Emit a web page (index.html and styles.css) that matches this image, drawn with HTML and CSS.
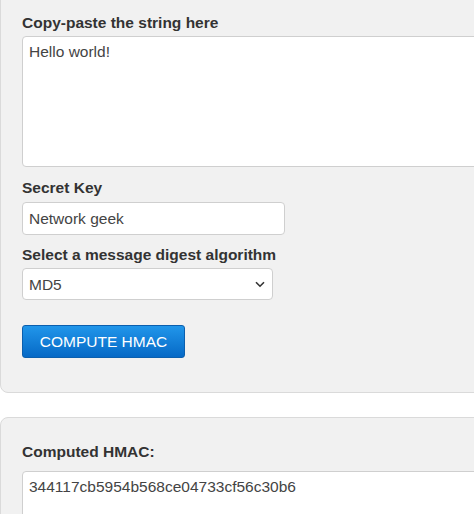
FILE: index.html
```html
<!DOCTYPE html>
<html lang="en">
<head>
    <meta charset="UTF-8">
    <meta name="viewport" content="width=device-width, initial-scale=1.0">
    <title>HMAC Generator</title>
    <link rel="stylesheet" href="styles.css">
</head>
<body>

    <div class="panel panel-input">
        <label class="label label-first" for="message">Copy-paste the string here</label>
        <textarea id="message" class="field field-area">Hello world!</textarea>

        <label class="label label-key" for="secretKey">Secret Key</label>
        <input type="text" id="secretKey" class="field field-key" value="Network geek">

        <label class="label label-algo" for="algo">Select a message digest algorithm</label>
        <div class="select-wrap">
            <select id="algo" class="field field-select">
                <option>MD5</option>
                <option>SHA1</option>
                <option>SHA256</option>
                <option>SHA512</option>
            </select>
            <svg class="chevron" width="10" height="7" viewBox="0 0 10 7">
                <path d="M1 1.2 L5 5.2 L9 1.2" fill="none" stroke="#333" stroke-width="1.6"/>
            </svg>
        </div>

        <button type="button" class="btn-compute">COMPUTE HMAC</button>
    </div>

    <div class="panel panel-output">
        <label class="label" for="result">Computed HMAC:</label>
        <div id="result" class="field field-result">344117cb5954b568ce04733cf56c30b6</div>
    </div>

</body>
</html>
```

FILE: styles.css
```css
body {
    margin: 0;
    font-family: "Liberation Sans", Arial, sans-serif;
    font-size: 15.5px;
    color: #333;
    background-color: #fff;
    overflow: hidden;
}
.panel {
    width: 580px;
    background-color: #f1f1f1;
    border: 1px solid #dadada;
    border-radius: 8px;
    padding: 0 21px;
}
.panel-input {
    margin-top: -10px;
    padding-top: 23px;
    padding-bottom: 34px;
}
.panel-output {
    margin-top: 24px;
    padding-top: 25px;
    height: 100px;
}
.label {
    display: block;
    font-weight: bold;
    line-height: 18px;
    color: #333;
}
.field {
    display: block;
    box-sizing: border-box;
    font-family: "Liberation Sans", Arial, sans-serif;
    font-size: 15.5px;
    color: #444;
    background-color: #fff;
    border: 1px solid #cfcfcf;
    border-radius: 4px;
    margin: 0;
}
.field-area {
    margin-top: 4px;
    width: 580px;
    height: 131px;
    padding: 6px 6px;
    line-height: 18px;
    resize: none;
}
.label-key {
    margin-top: 12px;
}
.field-key {
    margin-top: 5px;
    width: 263px;
    height: 33px;
    padding: 0 6px;
}
.label-algo {
    margin-top: 11px;
}
.select-wrap {
    position: relative;
    width: 251px;
    margin-top: 4px;
}
.field-select {
    width: 251px;
    height: 32px;
    padding: 0 6px;
    appearance: none;
    -webkit-appearance: none;
}
.chevron {
    position: absolute;
    right: 8px;
    top: 13px;
}
.btn-compute {
    display: block;
    margin-top: 25px;
    width: 163px;
    height: 33px;
    font-family: "Liberation Sans", Arial, sans-serif;
    font-size: 15.5px;
    color: #fff;
    background: linear-gradient(#2196ea, #0669c6);
    border: 1px solid #0b5fae;
    border-radius: 3px;
    padding: 0;
}
.field-result {
    margin-top: 10px;
    width: 580px;
    height: 70px;
    padding: 6px 6px;
    line-height: 18px;
}
```
